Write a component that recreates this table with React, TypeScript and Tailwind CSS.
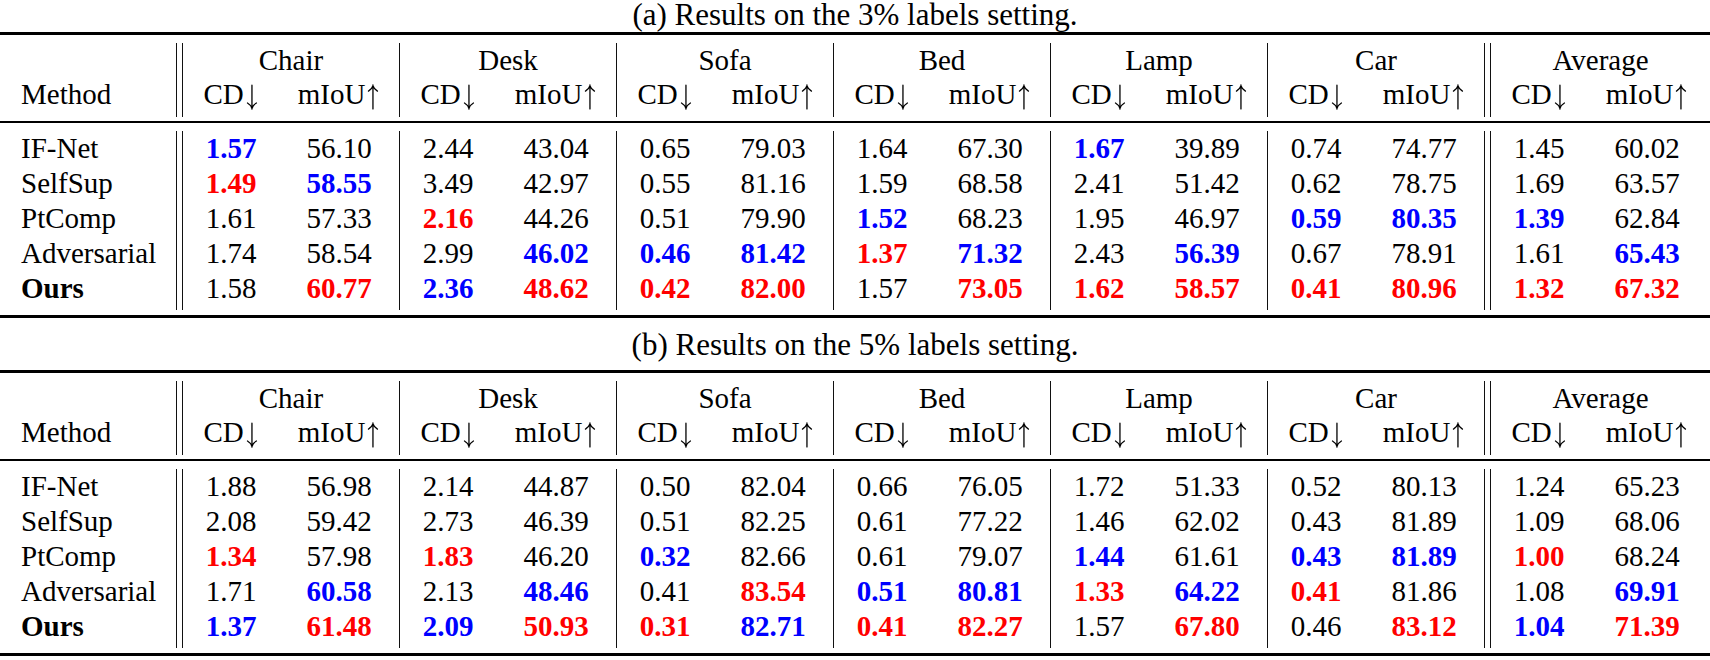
import React from "react";

type Row = [string, string[]];

const groups = ["Chair", "Desk", "Sofa", "Bed", "Lamp", "Car", "Average"];

const tableA: Row[] = [
  ["IF-Net", ["1.57b", "56.10", "2.44", "43.04", "0.65", "79.03", "1.64", "67.30", "1.67b", "39.89", "0.74", "74.77", "1.45", "60.02"]],
  ["SelfSup", ["1.49r", "58.55b", "3.49", "42.97", "0.55", "81.16", "1.59", "68.58", "2.41", "51.42", "0.62", "78.75", "1.69", "63.57"]],
  ["PtComp", ["1.61", "57.33", "2.16r", "44.26", "0.51", "79.90", "1.52b", "68.23", "1.95", "46.97", "0.59b", "80.35b", "1.39b", "62.84"]],
  ["Adversarial", ["1.74", "58.54", "2.99", "46.02b", "0.46b", "81.42b", "1.37r", "71.32b", "2.43", "56.39b", "0.67", "78.91", "1.61", "65.43b"]],
  ["Ours", ["1.58", "60.77r", "2.36b", "48.62r", "0.42r", "82.00r", "1.57", "73.05r", "1.62r", "58.57r", "0.41r", "80.96r", "1.32r", "67.32r"]],
];

const tableB: Row[] = [
  ["IF-Net", ["1.88", "56.98", "2.14", "44.87", "0.50", "82.04", "0.66", "76.05", "1.72", "51.33", "0.52", "80.13", "1.24", "65.23"]],
  ["SelfSup", ["2.08", "59.42", "2.73", "46.39", "0.51", "82.25", "0.61", "77.22", "1.46", "62.02", "0.43", "81.89", "1.09", "68.06"]],
  ["PtComp", ["1.34r", "57.98", "1.83r", "46.20", "0.32b", "82.66", "0.61", "79.07", "1.44b", "61.61", "0.43b", "81.89b", "1.00r", "68.24"]],
  ["Adversarial", ["1.71", "60.58b", "2.13", "48.46b", "0.41", "83.54r", "0.51b", "80.81b", "1.33r", "64.22b", "0.41r", "81.86", "1.08", "69.91b"]],
  ["Ours", ["1.37b", "61.48r", "2.09b", "50.93r", "0.31r", "82.71b", "0.41r", "82.27r", "1.57", "67.80r", "0.46", "83.12r", "1.04b", "71.39r"]],
];

function Val({ v }: { v: string }) {
  const last = v[v.length - 1];
  if (last === "b") return <span className="font-bold text-[#0000ff]">{v.slice(0, -1)}</span>;
  if (last === "r") return <span className="font-bold text-[#ff0000]">{v.slice(0, -1)}</span>;
  return <span>{v}</span>;
}

function Arrow({ up }: { up?: boolean }) {
  return (
    <svg
      viewBox="0 0 14 26"
      className="inline-block w-[0.48em] h-[0.9em] align-[-0.2em] ml-[1px]"
      fill="none"
      stroke="black"
      strokeWidth="1.3"
      strokeLinecap="round"
    >
      {up ? (
        <path d="M7 25V1.5 M2.5 7 Q6 5 7 1.5 Q8 5 11.5 7" />
      ) : (
        <path d="M7 1V24.5 M2.5 19 Q6 21 7 24.5 Q8 21 11.5 19" />
      )}
    </svg>
  );
}

function DoubleLine() {
  return <div className="w-[7px] shrink-0 border-x border-[#111]" />;
}

function groupClass(g: number) {
  if (g === 6) return "flex-1";
  if (g === 5) return "w-[216px] shrink-0";
  return "w-[217px] shrink-0 border-r border-[#111]";
}

function Header() {
  return (
    <div className="flex mt-[8px]">
      <div className="w-[176px] shrink-0 pl-[21px] pb-[6px]">
        <div className="h-[34px]" />
        <div className="h-[34px] leading-[34px]">Method</div>
      </div>
      <DoubleLine />
      {groups.map((g, i) => (
        <React.Fragment key={g}>
          <div className={groupClass(i) + " pb-[6px]"}>
            <div className="h-[34px] leading-[34px] text-center">{g}</div>
            <div className="flex h-[34px] leading-[34px]">
              <div className="w-[96px] text-center">
                CD
                <Arrow />
              </div>
              <div className="w-[120px] text-center">
                mIoU
                <Arrow up />
              </div>
            </div>
          </div>
          {i === 5 && <DoubleLine />}
        </React.Fragment>
      ))}
    </div>
  );
}

function Body({ rows }: { rows: Row[] }) {
  return (
    <div className="flex mt-[8px]">
      <div className="w-[176px] shrink-0 pl-[21px] pb-[4px]">
        {rows.map(([name], r) => (
          <div key={name} className={"h-[35px] leading-[35px]" + (r === 4 ? " font-bold" : "")}>
            {name}
          </div>
        ))}
      </div>
      <DoubleLine />
      {groups.map((g, i) => (
        <React.Fragment key={g}>
          <div className={groupClass(i) + " pb-[4px]"}>
            {rows.map(([name, vals]) => (
              <div key={name} className="flex h-[35px] leading-[35px]">
                <div className="w-[96px] text-center">
                  <Val v={vals[i * 2]} />
                </div>
                <div className="w-[120px] text-center">
                  <Val v={vals[i * 2 + 1]} />
                </div>
              </div>
            ))}
          </div>
          {i === 5 && <DoubleLine />}
        </React.Fragment>
      ))}
    </div>
  );
}

function Table({ rows }: { rows: Row[] }) {
  return (
    <div>
      <div className="h-[3px] bg-black" />
      <Header />
      <div className="h-[2px] bg-black mt-[4px]" />
      <Body rows={rows} />
      <div className="h-[3px] bg-black mt-[5px]" />
    </div>
  );
}

export default function App() {
  return (
    <div className="w-[1710px] h-[660px] bg-white text-black font-['Liberation_Serif','Times_New_Roman',serif] text-[29px] overflow-hidden">
      <div className="h-[32px] pt-[1px] leading-[28px] text-[31px] text-center">(a) Results on the 3% labels setting.</div>
      <Table rows={tableA} />
      <div className="h-[52px] leading-[54px] text-[31px] text-center">(b) Results on the 5% labels setting.</div>
      <Table rows={tableB} />
    </div>
  );
}
